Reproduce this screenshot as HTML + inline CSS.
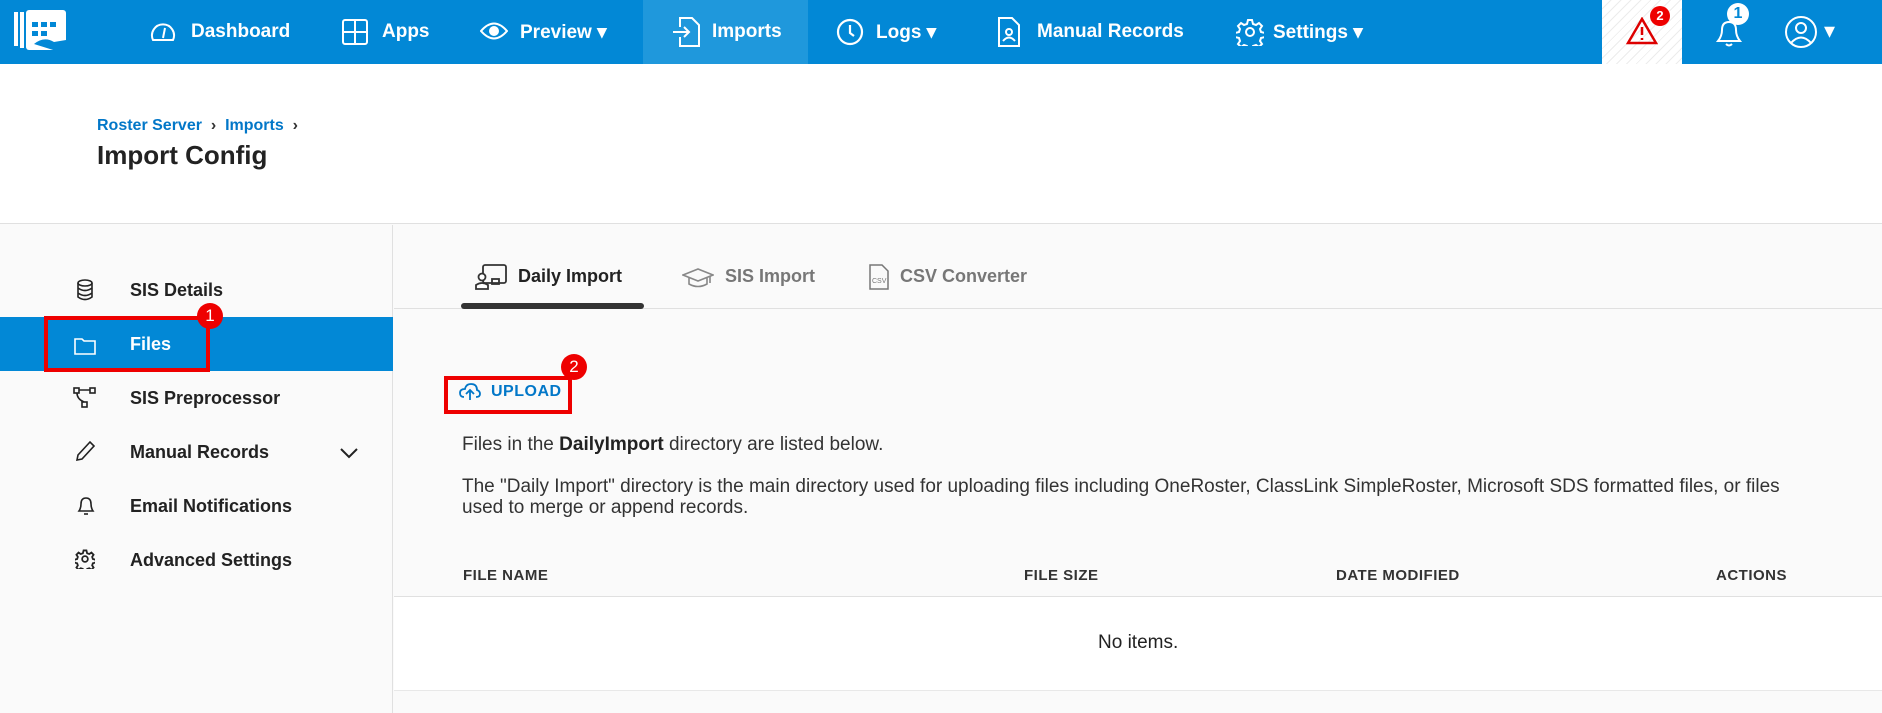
<!DOCTYPE html>
<html><head><meta charset="utf-8"><style>
*{box-sizing:border-box;margin:0;padding:0}
body{width:1882px;height:713px;overflow:hidden;font-family:"Liberation Sans",sans-serif;background:#fafafa;color:#222;position:relative}
.nav{position:absolute;left:0;top:0;width:1882px;height:64px;background:#0288d6}
.ni{position:absolute;top:0;height:64px;display:flex;align-items:center;color:#fff;font-size:19px;font-weight:bold}
.ni svg{position:absolute}
.abs{position:absolute}
.hdr{position:absolute;left:0;top:64px;width:1882px;height:160px;background:#fff;border-bottom:1px solid #e0e0e0}
.side{position:absolute;left:0;top:225px;width:393px;height:488px;border-right:1px solid #e0e0e0;background:#fafafa}
.si{position:absolute;left:130px;font-size:18px;font-weight:bold;color:#222}
.badge{position:absolute;width:26px;height:26px;border-radius:50%;background:#e00;color:#fff;font-size:17px;text-align:center;line-height:26px}
.th{position:absolute;top:567px;font-size:15px;font-weight:bold;color:#333;letter-spacing:.5px}
</style></head><body>
<div class="nav">
 <svg class="abs" style="left:14px;top:10px" width="58" height="44" viewBox="0 0 58 44" fill="#fff"><rect x="0" y="2" width="4" height="34"/><rect x="6" y="2" width="4" height="36"/><rect x="12" y="0" width="40" height="40" rx="3"/><g fill="#0288d6"><rect x="18" y="12" width="6" height="5"/><rect x="27" y="12" width="6" height="5"/><rect x="36" y="12" width="6" height="5"/><rect x="18" y="21" width="6" height="5"/><rect x="27" y="21" width="6" height="5"/><path d="M20 34 Q30 26 40 32 L52 30 L52 44 Z"/></g></svg>
 <div class="abs" style="left:643px;top:0;width:165px;height:64px;background:#1f98dc"></div>
 <div class="ni" style="left:150px"><svg style="left:0;top:20px" width="26" height="24" viewBox="0 0 26 24" fill="none" stroke="#fff" stroke-width="2"><path d="M3 20 A11 11 0 1 1 23 20 Z"/><path d="M13 18 L15 8"/></svg><span style="margin-left:41px">Dashboard</span></div>
 <div class="ni" style="left:342px"><svg style="left:0;top:19px" width="26" height="26" viewBox="0 0 26 26" fill="none" stroke="#fff" stroke-width="2"><rect x="1" y="1" width="24" height="24" rx="2"/><path d="M13 1V25M1 13H25"/></svg><span style="margin-left:40px">Apps</span></div>
 <div class="ni" style="left:480px"><svg style="left:0;top:20px" width="28" height="22" viewBox="0 0 28 22" fill="none" stroke="#fff" stroke-width="2"><path d="M1 11 Q14 -4 27 11 Q14 26 1 11Z"/><circle cx="14" cy="11" r="4" fill="#fff"/></svg><span style="margin-left:40px">Preview ▾</span></div>
 <div class="ni" style="left:672px"><svg style="left:0;top:17px" width="28" height="30" viewBox="0 0 28 30" fill="none" stroke="#fff" stroke-width="2"><path d="M8 10V1H20L27 8V29H8V20"/><path d="M1 15H17M12 10L17 15L12 20"/></svg><span style="margin-left:40px">Imports</span></div>
 <div class="ni" style="left:836px"><svg style="left:0;top:18px" width="28" height="28" viewBox="0 0 28 28" fill="none" stroke="#fff" stroke-width="2.2"><circle cx="14" cy="14" r="12"/><path d="M14 7V15L18 18"/></svg><span style="margin-left:40px">Logs ▾</span></div>
 <div class="ni" style="left:998px"><svg style="left:0;top:17px" width="22" height="30" viewBox="0 0 22 30" fill="none" stroke="#fff" stroke-width="2"><path d="M1 1H14L21 8V29H1Z"/><circle cx="11" cy="15" r="3"/><path d="M5 24Q11 17 17 24"/></svg><span style="margin-left:39px">Manual Records</span></div>
 <div class="ni" style="left:1236px"><svg style="left:0;top:18px" width="28" height="28" viewBox="0 0 28 28" fill="none" stroke="#fff" stroke-width="2"><circle cx="14" cy="14" r="4"/><path d="M12 2h4l1 4 3 1 3-2 3 3-2 3 1 3 4 1v4l-4 1-1 3 2 3-3 3-3-2-3 1-1 4h-4l-1-4-3-1-3 2-3-3 2-3-1-3-4-1v-4l4-1 1-3-2-3 3-3 3 2 3-1z"/></svg><span style="margin-left:37px">Settings ▾</span></div>
 <div class="abs" style="left:1602px;top:0;width:80px;height:64px;background:repeating-linear-gradient(135deg,#fff 0 6px,#ececec 6px 7px)"></div>
 <svg class="abs" style="left:1626px;top:17px" width="32" height="28" viewBox="0 0 32 28" fill="none" stroke="#d00" stroke-width="2.5"><path d="M16 2L30 26H2Z"/><path d="M16 10V18M16 21V23"/></svg>
 <div class="badge" style="left:1650px;top:6px;width:20px;height:20px;line-height:20px;font-size:13px;font-weight:bold">2</div>
 <svg class="abs" style="left:1714px;top:14px" width="30" height="34" viewBox="0 0 30 34" fill="none" stroke="#fff" stroke-width="2"><path d="M4 27Q8 22 8 16Q8 8 15 8Q22 8 22 16Q22 22 26 27Z"/><path d="M12 30Q15 33 18 30"/></svg>
 <div class="abs" style="left:1727px;top:3px;width:22px;height:22px;border-radius:50%;background:#fff;color:#0288d6;font-weight:bold;font-size:16px;text-align:center;line-height:22px">1</div>
 <svg class="abs" style="left:1784px;top:15px" width="34" height="34" viewBox="0 0 34 34" fill="none" stroke="#fff" stroke-width="2"><circle cx="17" cy="17" r="15"/><circle cx="17" cy="13" r="5"/><path d="M7 28Q17 17 27 28"/></svg>
 <div class="abs" style="left:1824px;top:18px;color:#fff;font-size:22px">▾</div>
</div>
<div class="hdr">
 <div class="abs" style="left:97px;top:53px;font-size:16px;font-weight:bold;color:#0277c8">Roster Server &nbsp;<span style="color:#333">›</span>&nbsp; Imports &nbsp;<span style="color:#333">›</span></div>
 <div class="abs" style="left:97px;top:76px;font-size:26px;font-weight:bold;color:#222">Import Config</div>
</div>
<div class="side">
 <div class="abs" style="left:0;top:92px;width:393px;height:54px;background:#0288d6"></div>
 <div class="abs" style="left:44px;top:91px;width:166px;height:56px;border:4px solid #e00"></div>
 <div class="badge" style="left:197px;top:78px">1</div>
 <svg class="abs" style="left:76px;top:54px" width="18" height="22" viewBox="0 0 18 22" fill="none" stroke="#222" stroke-width="1.6"><ellipse cx="9" cy="4" rx="7" ry="3"/><path d="M2 4V18Q9 23 16 18V4M2 9Q9 14 16 9M2 14Q9 19 16 14"/></svg>
 <div class="si" style="top:55px">SIS Details</div>
 <svg class="abs" style="left:74px;top:112px" width="22" height="18" viewBox="0 0 22 18" fill="none" stroke="#fff" stroke-width="1.6"><path d="M1 2H8L10 4H21V17H1Z"/></svg>
 <div class="si" style="top:109px;color:#fff">Files</div>
 <svg class="abs" style="left:73px;top:162px" width="24" height="22" viewBox="0 0 24 22" fill="none" stroke="#222" stroke-width="1.6"><rect x="1" y="1" width="5" height="5"/><rect x="17" y="1" width="5" height="5"/><rect x="9" y="15" width="5" height="5"/><path d="M6 3H17M4 6Q4 12 11 15"/></svg>
 <div class="si" style="top:163px">SIS Preprocessor</div>
 <svg class="abs" style="left:75px;top:215px" width="20" height="22" viewBox="0 0 20 22" fill="none" stroke="#222" stroke-width="1.6"><path d="M2 20L3 15L15 2L19 6L7 19Z"/></svg>
 <div class="si" style="top:217px">Manual Records</div>
 <svg class="abs" style="left:340px;top:222px" width="18" height="12" viewBox="0 0 18 12" fill="none" stroke="#222" stroke-width="2"><path d="M1 2L9 10L17 2"/></svg>
 <svg class="abs" style="left:77px;top:270px" width="18" height="22" viewBox="0 0 18 22" fill="none" stroke="#222" stroke-width="1.6"><path d="M2 16Q4 13 4 9Q4 3 9 3Q14 3 14 9Q14 13 16 16Z"/><path d="M7 19H11"/></svg>
 <div class="si" style="top:271px">Email Notifications</div>
 <svg class="abs" style="left:75px;top:324px" width="20" height="20" viewBox="0 0 28 28" fill="none" stroke="#222" stroke-width="2.5"><circle cx="14" cy="14" r="4"/><path d="M12 2h4l1 4 3 1 3-2 3 3-2 3 1 3 4 1v4l-4 1-1 3 2 3-3 3-3-2-3 1-1 4h-4l-1-4-3-1-3 2-3-3 2-3-1-3-4-1v-4l4-1 1-3-2-3 3-3 3 2 3-1z"/></svg>
 <div class="si" style="top:325px">Advanced Settings</div>
</div>
<div class="abs" style="left:394px;top:308px;width:1488px;height:1px;background:#e0e0e0"></div>
<div class="abs" style="left:461px;top:303px;width:183px;height:6px;border-radius:3px;background:#333"></div>
<svg class="abs" style="left:475px;top:264px" width="32" height="26" viewBox="0 0 32 26" fill="none" stroke="#333" stroke-width="1.8"><rect x="8" y="1" width="23" height="18" rx="2"/><circle cx="7" cy="13" r="3.5" fill="#fff"/><path d="M1 25V21Q7 17 13 21V25Z" fill="#fff"/><rect x="17" y="15" width="7" height="5"/></svg>
<div class="abs" style="left:518px;top:266px;font-size:18px;font-weight:bold;color:#222">Daily Import</div>
<svg class="abs" style="left:682px;top:268px" width="32" height="20" viewBox="0 0 32 20" fill="none" stroke="#888" stroke-width="1.6"><path d="M1 7L16 1L31 7L16 13Z"/><path d="M7 10V16Q16 21 25 16V10M28 8V15"/></svg>
<div class="abs" style="left:725px;top:266px;font-size:18px;font-weight:bold;color:#777">SIS Import</div>
<svg class="abs" style="left:869px;top:264px" width="20" height="26" viewBox="0 0 20 26" fill="none" stroke="#777" stroke-width="1.5"><path d="M1 1H13L19 7V25H1Z"/><text x="3" y="19" font-size="7" fill="#777" stroke="none" font-family="Liberation Sans">CSV</text></svg>
<div class="abs" style="left:900px;top:266px;font-size:18px;font-weight:bold;color:#777">CSV Converter</div>
<div class="abs" style="left:444px;top:376px;width:128px;height:38px;border:4px solid #e00"></div>
<div class="badge" style="left:561px;top:354px">2</div>
<svg class="abs" style="left:459px;top:383px" width="22" height="18" viewBox="0 0 22 18" fill="none" stroke="#0277c8" stroke-width="1.8"><path d="M5 14Q1 14 1 10Q1 6 6 6Q7 1 12 1Q18 1 18 7Q21 8 21 11Q21 14 17 14"/><path d="M11 17V8M7 11L11 7L15 11"/></svg>
<div class="abs" style="left:491px;top:383px;font-size:16px;font-weight:bold;color:#0277c8;letter-spacing:.5px">UPLOAD</div>
<div class="abs" style="left:462px;top:434px;font-size:19px;color:#333">Files in the <b style="color:#222">DailyImport</b> directory are listed below.</div>
<div class="abs" style="left:462px;top:476px;width:1360px;font-size:19px;line-height:21px;color:#333">The "Daily Import" directory is the main directory used for uploading files including OneRoster, ClassLink SimpleRoster, Microsoft SDS formatted files, or files used to merge or append records.</div>
<div class="th" style="left:463px">FILE NAME</div>
<div class="th" style="left:1024px">FILE SIZE</div>
<div class="th" style="left:1336px">DATE MODIFIED</div>
<div class="th" style="left:1716px">ACTIONS</div>
<div class="abs" style="left:394px;top:596px;width:1488px;height:1px;background:#e0e0e0"></div>
<div class="abs" style="left:394px;top:597px;width:1488px;height:93px;background:#fff"></div>
<div class="abs" style="left:1098px;top:632px;font-size:19px;color:#222">No items.</div>
<div class="abs" style="left:394px;top:690px;width:1488px;height:1px;background:#e8e8e8"></div>
</body></html>
